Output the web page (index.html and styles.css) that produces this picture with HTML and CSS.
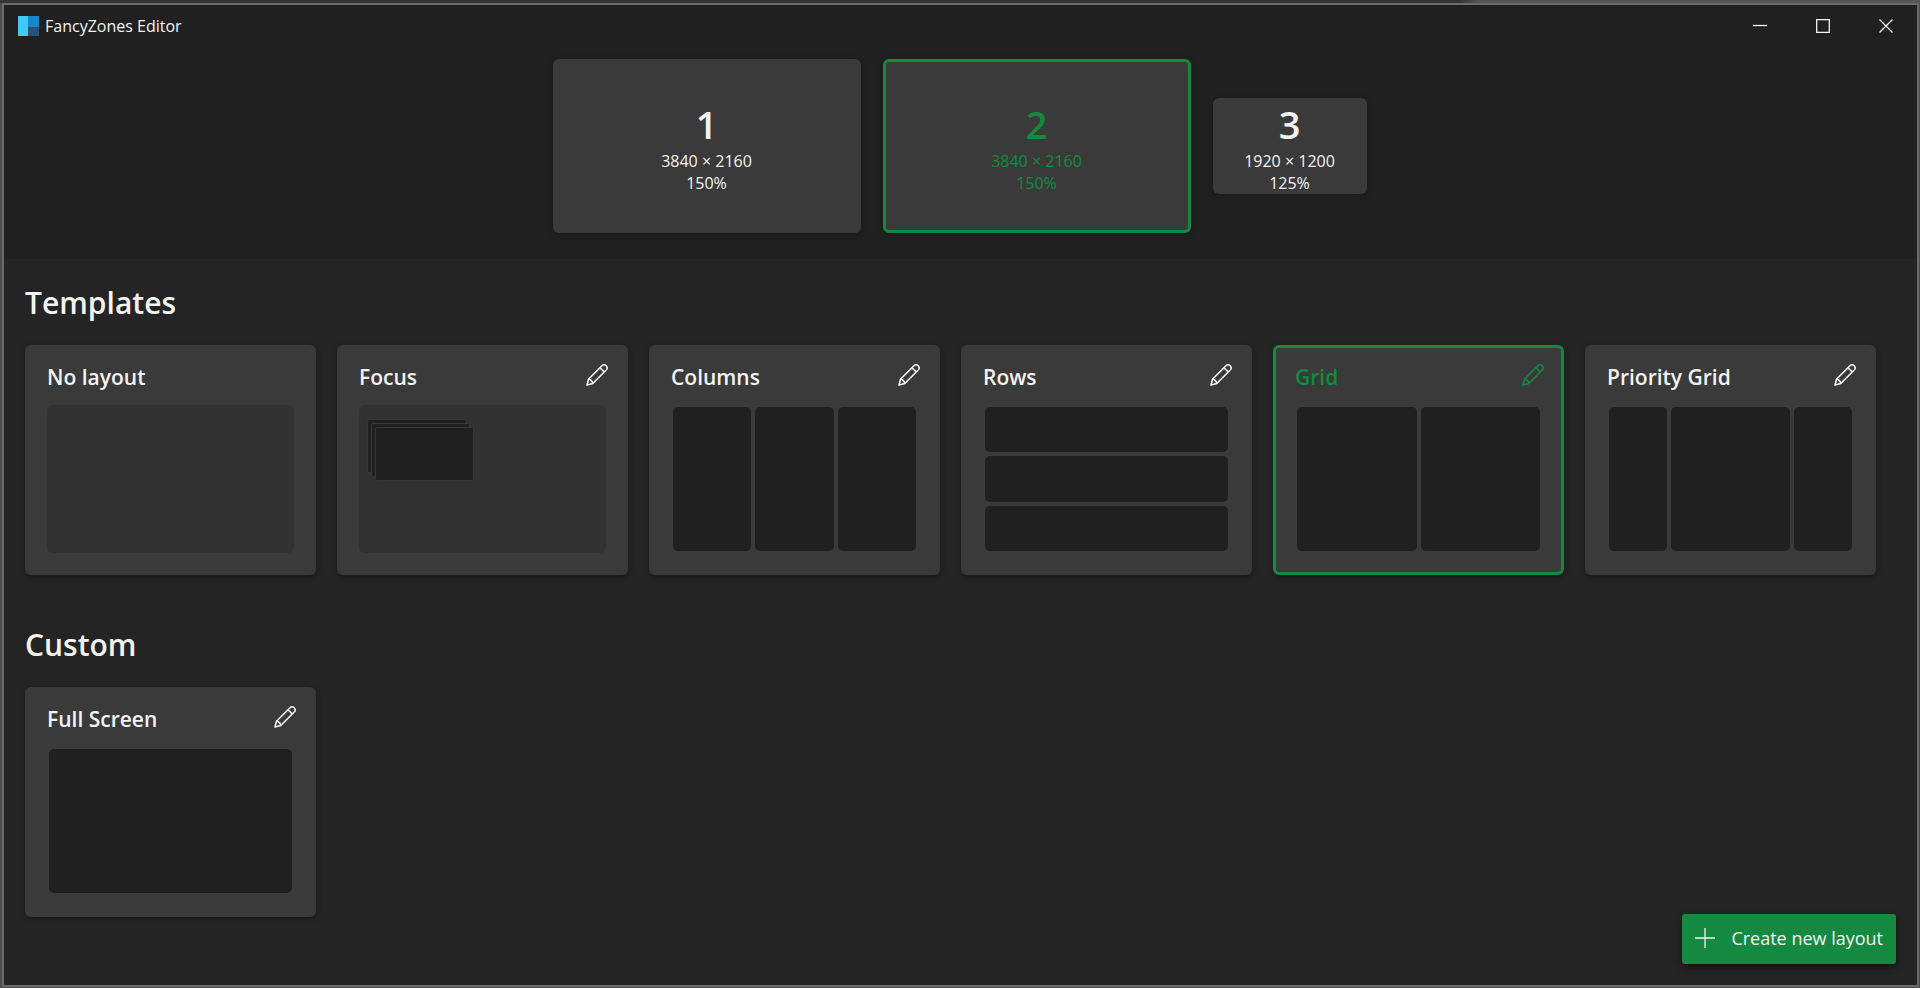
FILE: index.html
```html
<!DOCTYPE html>
<html lang="en">
  <head>
    <meta charset="UTF-8" />
    <meta name="viewport" content="width=device-width, initial-scale=1.0" />
    <title>FancyZones Editor</title>
    <link rel="stylesheet" href="styles.css">
  </head>

  <body>
    <!-- Pencil icon, shared by all the layout cards -->
    <svg class="symbols" aria-hidden="true">
      <symbol id="pencil" viewBox="0 0 22 22">
        <g fill="none" stroke="currentColor" stroke-width="1.6" stroke-linejoin="round">
          <path d="M1 21L2.5 15.2L15.7 2C17 .7 18.9 .5 20.2 1.8C21.5 3.1 21.3 5 20 6.3L6.8 19.5Z" />
          <path d="M14 3.7L18.3 8M2.5 15.2C4.5 15.2 6.8 17.5 6.8 19.5" />
        </g>
      </symbol>
    </svg>

    <div class="window">
      <header class="top">
        <div class="titlebar">
          <svg class="logo" viewBox="0 0 21 20">
            <rect width="10" height="20" fill="#40cbf7" />
            <rect x="10" width="11" height="11" fill="#1a86cc" />
            <rect x="10" y="11" width="11" height="9" fill="#24567a" />
          </svg>
          <span class="title">FancyZones Editor</span>
          <button class="control" aria-label="Minimize">
            <svg viewBox="0 0 14 14"><path d="M0 6.5H14" /></svg>
          </button>
          <button class="control" aria-label="Maximize">
            <svg viewBox="0 0 14 14"><path d="M.7 .7H13.3V13.3H.7Z" /></svg>
          </button>
          <button class="control" aria-label="Close">
            <svg viewBox="0 0 14 14"><path d="M.5 .5L13.5 13.5M13.5 .5L.5 13.5" /></svg>
          </button>
        </div>

        <!-- Monitors -->
        <div class="monitors">
          <button class="monitor">
            <span class="number">1</span>
            <span>3840 × 2160</span>
            <span>150%</span>
          </button>
          <button class="monitor selected">
            <span class="number">2</span>
            <span>3840 × 2160</span>
            <span>150%</span>
          </button>
          <button class="monitor small">
            <span class="number">3</span>
            <span>1920 × 1200</span>
            <span>125%</span>
          </button>
        </div>
      </header>

      <main>
        <section>
          <h1>Templates</h1>
          <div class="cards">
            <article class="card">
              <h2>No layout</h2>
              <div class="preview empty"></div>
            </article>

            <article class="card">
              <h2>Focus</h2>
              <button class="edit" aria-label="Edit Focus"><svg><use href="#pencil" /></svg></button>
              <div class="preview empty focus">
                <div class="pane"></div>
                <div class="pane second"></div>
                <div class="pane third"></div>
              </div>
            </article>

            <article class="card">
              <h2>Columns</h2>
              <button class="edit" aria-label="Edit Columns"><svg><use href="#pencil" /></svg></button>
              <div class="preview columns">
                <div class="zone"></div>
                <div class="zone"></div>
                <div class="zone"></div>
              </div>
            </article>

            <article class="card">
              <h2>Rows</h2>
              <button class="edit" aria-label="Edit Rows"><svg><use href="#pencil" /></svg></button>
              <div class="preview">
                <div class="zone"></div>
                <div class="zone"></div>
                <div class="zone"></div>
              </div>
            </article>

            <article class="card selected">
              <h2>Grid</h2>
              <button class="edit" aria-label="Edit Grid"><svg><use href="#pencil" /></svg></button>
              <div class="preview columns">
                <div class="zone"></div>
                <div class="zone"></div>
              </div>
            </article>

            <article class="card">
              <h2>Priority Grid</h2>
              <button class="edit" aria-label="Edit Priority Grid"><svg><use href="#pencil" /></svg></button>
              <div class="preview priority">
                <div class="zone"></div>
                <div class="zone"></div>
                <div class="zone"></div>
              </div>
            </article>
          </div>
        </section>

        <section>
          <h1>Custom</h1>
          <div class="cards">
            <article class="card">
              <h2>Full Screen</h2>
              <button class="edit" aria-label="Edit Full Screen"><svg><use href="#pencil" /></svg></button>
              <div class="preview">
                <div class="zone"></div>
              </div>
            </article>
          </div>
        </section>
      </main>

      <button class="create">
        <svg viewBox="0 0 20 20"><path d="M10 0V20M0 10H20" /></svg>
        Create new layout
      </button>
    </div>
  </body>
</html>
```
FILE: styles.css
```css
* {
  margin: 0;
  padding: 0;
  box-sizing: border-box;
}

body {
  min-height: 100vh;
  display: flex;
  padding: 3px 1px 1px 2px;
  background-color: #4c4c4c;
  background-image: linear-gradient(to right, #333 76%, #555 77%);
  background-size: 100% 3px;
  background-repeat: no-repeat;
  color: #f3f3f3;
  font-family: "Open Sans", "Noto Sans", sans-serif;
  font-size: 16px;
}

button {
  border: none;
  background: none;
  color: inherit;
  font: inherit;
  cursor: pointer;
}

svg {
  display: block;
}

.symbols {
  position: absolute;
  width: 0;
  height: 0;
}

.window {
  position: relative;
  flex: 1;
  border: 2px solid #6b6b6b;
  background-color: #242424;
}

.top {
  padding-bottom: 26px;
  background-color: #202020;
}

/* Title bar */
.titlebar {
  display: flex;
  align-items: center;
  height: 42px;
  padding-left: 14px;
}

.logo {
  width: 21px;
  height: 20px;
}

.title {
  flex: 1;
  margin-left: 6px;
}

.control {
  display: flex;
  align-items: center;
  justify-content: center;
  width: 63px;
  height: 42px;
}

.control svg {
  width: 14px;
  height: 14px;
}

.control path,
.create path {
  fill: none;
  stroke: #f3f3f3;
  stroke-width: 1.3;
}

/* Monitors */
.monitors {
  display: flex;
  align-items: center;
  justify-content: center;
  gap: 22px;
  padding: 12px 2px 0 0;
}

.monitor {
  display: flex;
  flex-direction: column;
  align-items: center;
  justify-content: center;
  width: 308px;
  height: 174px;
  border-radius: 6px;
  background-color: #3a3a3a;
  box-shadow: 0 1px 5px #1a1a1a;
  line-height: 22px;
}

.monitor.small {
  width: 154px;
  height: 96px;
}

.number {
  font-size: 38px;
  font-weight: 600;
  line-height: 52px;
}

.monitor.selected,
.card.selected {
  border: 3px solid #138a40;
  color: #138a40;
}

/* Layout cards */
main {
  padding: 22px 21px 0;
}

section {
  margin-bottom: 48px;
}

section:last-child {
  margin-bottom: 22px;
}

h1 {
  font-size: 30px;
  font-weight: 600;
  line-height: 44px;
}

.cards {
  display: flex;
  flex-wrap: wrap;
  gap: 21px;
  margin-top: 20px;
}

.card {
  display: grid;
  grid-template-columns: 1fr auto;
  grid-template-rows: 38px 148px;
  width: 291px;
  padding: 22px;
  border-radius: 6px;
  background-color: #3a3a3a;
  box-shadow: 0 2px 5px #1a1a1a;
}

.card.selected {
  padding: 19px;
}

h2 {
  font-size: 21px;
  font-weight: 600;
  line-height: 20px;
}

.edit {
  width: 22px;
  height: 22px;
  margin: -3px -2px 0 0;
}

.edit svg {
  width: 22px;
  height: 22px;
}

.preview {
  display: grid;
  grid-column: 1 / 3;
  gap: 4px;
  padding: 2px;
}

.columns {
  grid-auto-flow: column;
  grid-auto-columns: 1fr;
}

.priority {
  grid-template-columns: 58px 1fr 58px;
}

.zone {
  border-radius: 5px;
  background-color: #202020;
}

.empty {
  border-radius: 6px;
  background-color: #323232;
}

/* The focus panes are stacked over each other */
.focus {
  position: relative;
}

.pane {
  position: absolute;
  top: 14px;
  left: 8px;
  width: 99px;
  height: 54px;
  border: 1px solid #363636;
  border-radius: 2px;
  background-color: #202020;
}

.pane.second {
  top: 18px;
  left: 12px;
}

.pane.third {
  top: 22px;
  left: 16px;
}

/* Floating button in the corner of the window */
.create {
  position: absolute;
  right: 21px;
  bottom: 21px;
  display: flex;
  align-items: center;
  gap: 16px;
  height: 50px;
  padding: 0 13px 2px;
  border-radius: 3px;
  background-color: #138a40;
  box-shadow: 0 3px 6px #141414;
  font-size: 18px;
}

.create svg {
  width: 20px;
  height: 20px;
}
```
